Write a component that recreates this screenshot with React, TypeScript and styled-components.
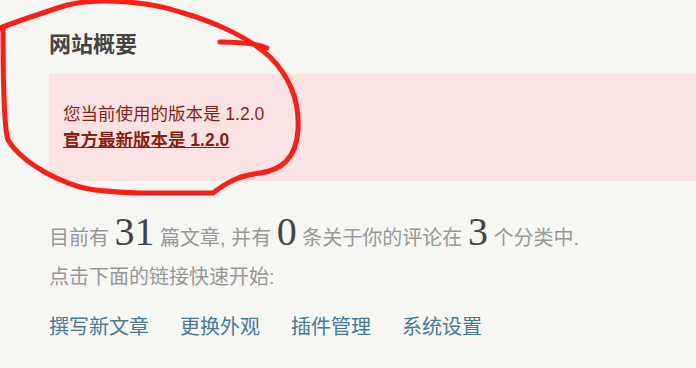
import styled, { createGlobalStyle } from 'styled-components';

const GlobalStyle = createGlobalStyle`
  html, body {
    margin: 0;
    padding: 0;
    background: #f6f6f3;
    overflow: hidden;
  }
  body {
    font-family: "Liberation Sans", "Noto Sans CJK SC", sans-serif;
  }
`;

const stats = { posts: 31, comments: 0, categories: 3 };

const links = ['撰写新文章', '更换外观', '插件管理', '系统设置'];

const App = () => {
  return (
    <Page>
      <GlobalStyle />
      <Main>
        <Title>网站概要</Title>
        <Notice>
          <NoticeLine>您当前使用的版本是 1.2.0</NoticeLine>
          <NoticeLink href="#">官方最新版本是 1.2.0</NoticeLink>
        </Notice>
        <Summary>
          目前有 <Num>{stats.posts}</Num> 篇文章, 并有 <Num>{stats.comments}</Num> 条关于你的评论在{' '}
          <Num>{stats.categories}</Num> 个分类中.
          <br />
          点击下面的链接快速开始:
        </Summary>
        <Shortcuts>
          {links.map((l) => (
            <Shortcut key={l} href="#">
              {l}
            </Shortcut>
          ))}
        </Shortcuts>
      </Main>
      <Scribble viewBox="0 0 696 368" width="696" height="368">
        <path
          d="M 0 28 C 10 24, 30 17, 67 5 C 100 -3, 150 2, 180 12 C 215 22, 250 38, 270 57 C 285 72, 300 95, 298 130 C 296 160, 280 170, 260 173 C 240 176, 230 180, 213 193 L 140 193 C 110 192, 90 190, 80 187 C 50 178, 20 160, 8 140 C 3 125, 3 60, 3 28"
        />
        <path d="M 220 42 C 240 42, 255 43, 267 48" />
      </Scribble>
    </Page>
  );
};

const Page = styled.div`
  position: relative;
  width: 696px;
  height: 368px;
  overflow: hidden;
`;

const Main = styled.div`
  padding: 30px 0 0 49px;
`;

const Title = styled.h2`
  margin: 0;
  font-size: 22px;
  line-height: 30px;
  font-weight: 700;
  color: #444;
`;

const Notice = styled.div`
  margin-top: 14px;
  padding: 27px 14px 28px;
  background: #fbe3e4;
  color: #8a1f11;
  font-size: 17.5px;
  line-height: 26px;
`;

const NoticeLine = styled.div``;

const NoticeLink = styled.a`
  display: inline-block;
  color: #8a1f11;
  font-weight: 700;
  text-decoration: underline;
`;

const Summary = styled.p`
  margin: 38px 0 0;
  font-size: 20px;
  line-height: 38.5px;
  color: #999;
`;

const Num = styled.em`
  font-style: normal;
  font-family: "Liberation Serif", "DejaVu Serif", serif;
  font-variant-numeric: oldstyle-nums;
  font-size: 40px;
  line-height: 0;
  color: #444;
`;

const Shortcuts = styled.nav`
  display: flex;
  gap: 31px;
  margin-top: 16px;
  font-size: 20px;
  line-height: 30px;
`;

const Shortcut = styled.a`
  color: #467b96;
  text-decoration: none;
`;

const Scribble = styled.svg`
  position: absolute;
  top: 0;
  left: 0;
  pointer-events: none;
  fill: none;
  stroke: #ff1e16;
  stroke-width: 5;
  stroke-linecap: round;
  stroke-linejoin: round;
`;

export default App;
